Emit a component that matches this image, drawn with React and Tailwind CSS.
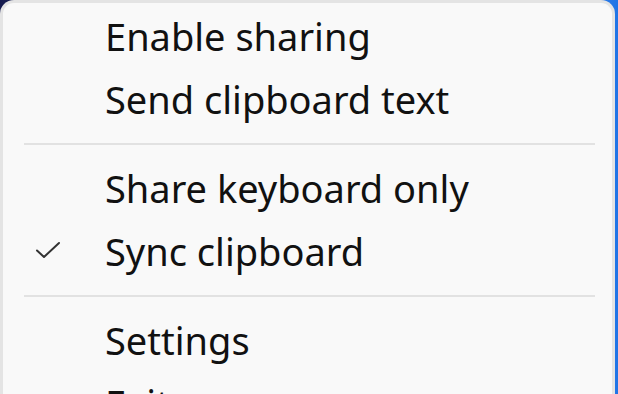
function Item({ label, checked }) {
  return (
    <div className="relative h-[63px] flex items-center pl-[102px] text-[38px] leading-[63px] text-[#111111]">
      {checked && (
        <svg
          className="absolute left-[32px] top-[20px]"
          width="26"
          height="20"
          viewBox="0 0 26 20"
          fill="none"
        >
          <path d="M2 10.5 L9 17 L24 3" stroke="#333" strokeWidth="2" strokeLinecap="round" strokeLinejoin="round" />
        </svg>
      )}
      <span>{label}</span>
    </div>
  );
}

function Separator() {
  return <div className="ml-[21px] mr-[17px] my-[12px] h-[2px] bg-[#e2e2e2]" />;
}

export default function App() {
  return (
    <div className="w-[618px] h-[394px] overflow-hidden bg-gradient-to-r from-[#151a4e] via-[#e6e6e6] to-[#1f74e6]">
      <div
        className="h-[420px] mr-[3px] bg-[#f9f9f9] border-[3px] border-b-0 border-[#e4e4e4] rounded-t-[14px] pt-[2px]"
        style={{ fontFamily: '"Segoe UI", "Noto Sans", sans-serif' }}
      >
        <Item label="Enable sharing" />
        <Item label="Send clipboard text" />
        <Separator />
        <Item label="Share keyboard only" />
        <Item label="Sync clipboard" checked />
        <Separator />
        <Item label="Settings" />
        <Item label="Exit" />
      </div>
    </div>
  );
}
